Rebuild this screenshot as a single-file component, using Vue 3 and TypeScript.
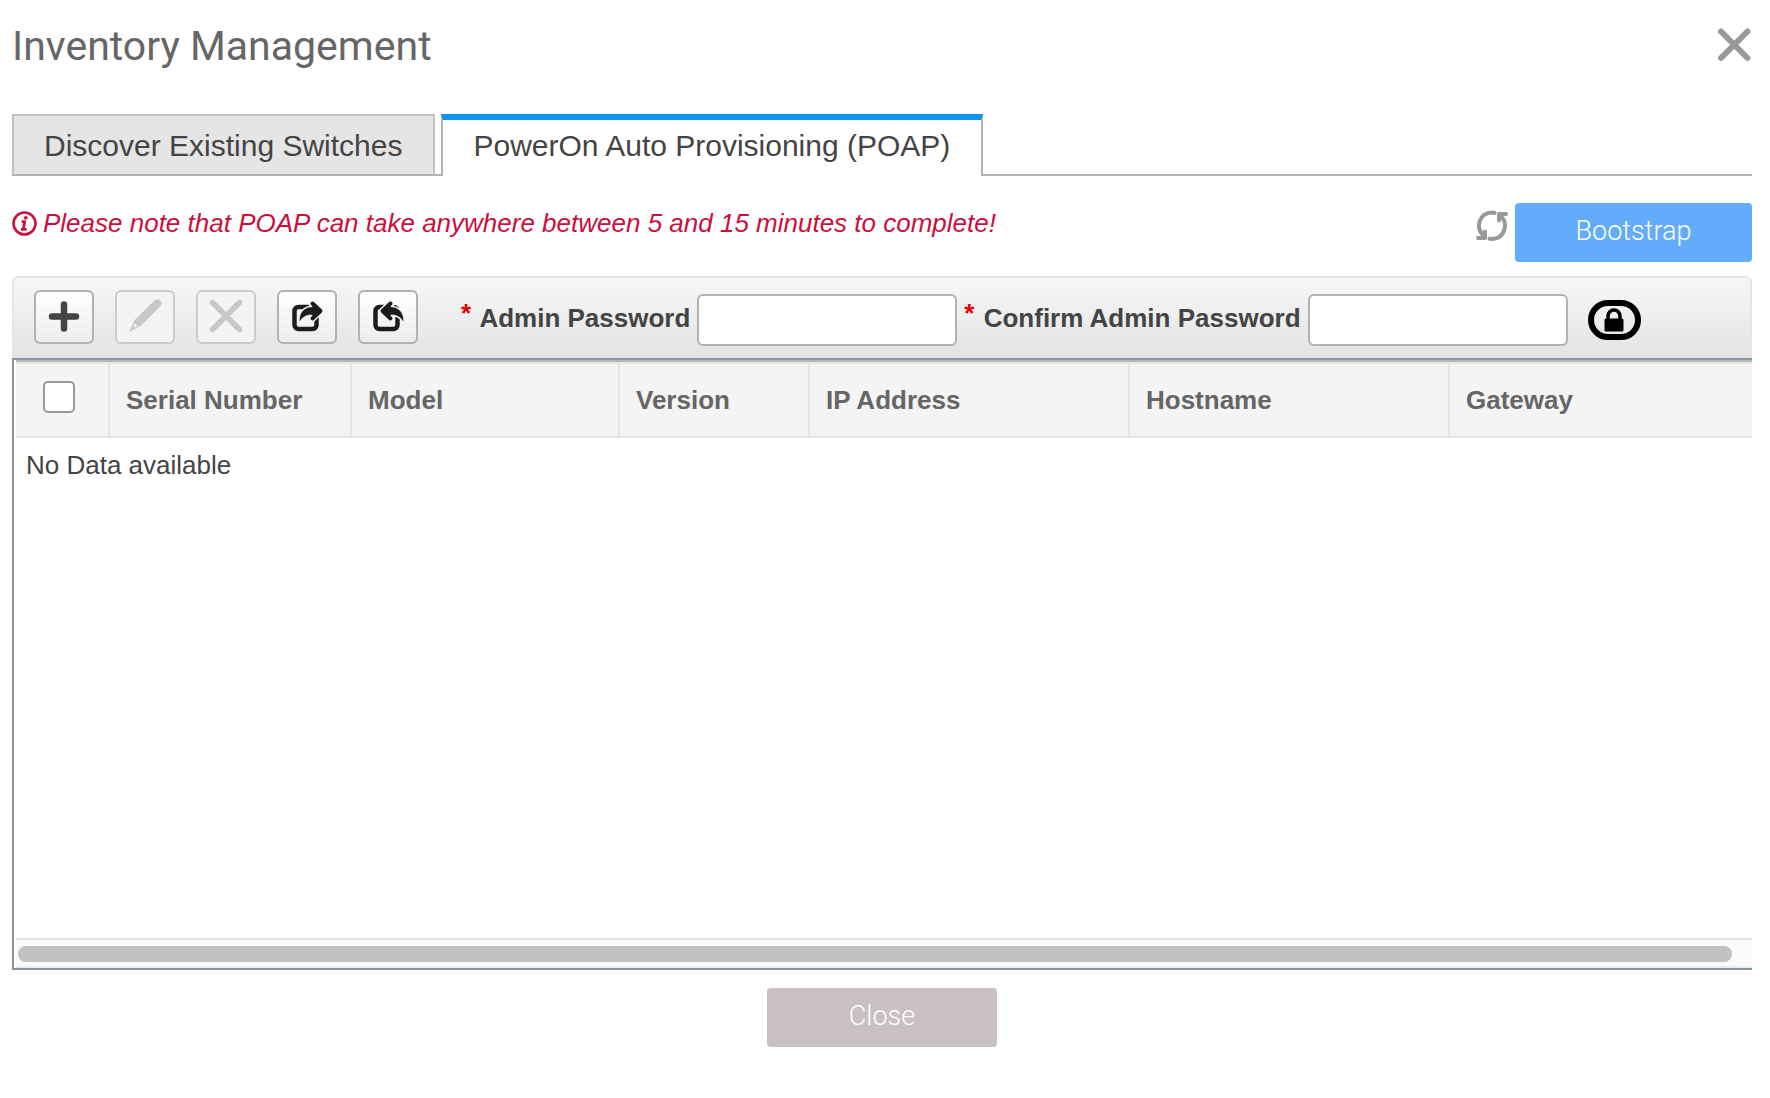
<script setup lang="ts">
import { ref } from 'vue'

interface Column {
  label: string
  width: number | null
}

const tabs: string[] = ['Discover Existing Switches', 'PowerOn Auto Provisioning (POAP)']
const activeTab = ref(1)

const columns: Column[] = [
  { label: 'Serial Number', width: 242 },
  { label: 'Model', width: 268 },
  { label: 'Version', width: 190 },
  { label: 'IP Address', width: 320 },
  { label: 'Hostname', width: 320 },
  { label: 'Gateway', width: null },
]

const password = ref('')
const confirmation = ref('')
const allSelected = ref(false)
</script>

<template>
  <main class="dialog">
    <header class="heading">
      <h1>Inventory Management</h1>
      <button class="plain" type="button" aria-label="Close dialog">
        <svg width="34" height="34" viewBox="0 0 34 34">
          <path d="M3 3.500 29.500 30M29.500 3.500 3 30" fill="none" stroke="#999" stroke-width="6" stroke-linecap="round" />
        </svg>
      </button>
    </header>

    <nav class="tabs" role="tablist">
      <button
        v-for="(tab, i) in tabs"
        :key="tab"
        type="button"
        role="tab"
        class="tab"
        :class="{ active: i === activeTab }"
        :aria-selected="i === activeTab"
        @click="activeTab = i"
      >{{ tab }}</button>
    </nav>

    <section class="notice-row">
      <p class="notice">
        <svg width="25" height="25" viewBox="0 0 25 25">
          <circle cx="12.5" cy="12.5" r="11" fill="none" stroke="#cc1340" stroke-width="2.6" />
          <circle cx="13.8" cy="6.8" r="1.9" fill="#cc1340" />
          <path d="M9.600 10.600h3.200l-1.400 7.400M9 18.300h5.600" fill="none" stroke="#cc1340" stroke-width="2.800" stroke-linejoin="round" />
        </svg>
        <span>Please note that POAP can take anywhere between 5 and 15 minutes to complete!</span>
      </p>
      <div class="actions">
        <button class="plain refresh" type="button" aria-label="Refresh">
          <svg width="32" height="32" viewBox="0 0 32 32" fill="none" stroke="#999" stroke-width="4" stroke-linecap="round" stroke-linejoin="round">
            <path d="M7 25C0 18 2 3 16.500 2.500L18.500 3" />
            <path d="M25 6.500C32 13 29.500 28 16.500 29L13.500 28.700" />
            <path d="M30 4H23V10.500M2 28H9V21.500" />
          </svg>
        </button>
        <button class="btn bootstrap" type="button">Bootstrap</button>
      </div>
    </section>

    <section class="toolbar">
      <div class="tools">
        <button class="tool" type="button" aria-label="Add">
          <svg width="40" height="40" viewBox="0 0 40 40">
            <path d="M20 7.500V31.500M8 19.500H32" fill="none" stroke="#444" stroke-width="6.500" stroke-linecap="round" />
          </svg>
        </button>
        <button class="tool" type="button" aria-label="Edit" disabled>
          <svg width="40" height="40" viewBox="0 0 40 40">
            <path d="M29.500 3.500Q32.500 1 35.500 3.500Q38 6.500 35 9.500L16 28.800L4 35L9.300 23.500Z" fill="#c8c8c8" />
            <path d="M9.800 26.500l3 2.800-2.600 1.200-1.500-1.400Z" fill="#f4f4f4" />
          </svg>
        </button>
        <button class="tool" type="button" aria-label="Delete" disabled>
          <svg width="40" height="40" viewBox="0 0 40 40">
            <path d="M6.500 5.500 33.500 32.500M33.500 5.500 6.500 32.500" fill="none" stroke="#c8c8c8" stroke-width="5.500" stroke-linecap="round" />
          </svg>
        </button>
        <button class="tool" type="button" aria-label="Export">
          <svg width="40" height="40" viewBox="0 0 40 40" fill="none" stroke-linecap="round" stroke-linejoin="round">
            <rect x="7.500" y="10" width="22" height="22" rx="4" stroke="#1b1c1d" stroke-width="4.500" />
            <path d="M12.500 24.500C12.500 14.500 18 10 26 10V18C20 17 16 19.500 12.500 24.500Z" fill="#f4f4f4" stroke="#f4f4f4" stroke-width="3" />
            <path d="M25.500 6.500 33.500 14 25.500 21.500Z" fill="#f4f4f4" stroke="#f4f4f4" stroke-width="7" />
            <path d="M12.500 24.500C12.500 14.500 18 10 26 10V18C20 17 16 19.500 12.500 24.500Z" fill="#1b1c1d" />
            <path d="M25.500 6.500 33.500 14 25.500 21.500" fill="#1b1c1d" stroke="#1b1c1d" stroke-width="4" />
          </svg>
        </button>
        <button class="tool" type="button" aria-label="Import">
          <svg width="40" height="40" viewBox="0 0 40 40" fill="none" stroke-linecap="round" stroke-linejoin="round">
            <rect x="7.500" y="10" width="22" height="22" rx="4" stroke="#1b1c1d" stroke-width="4.500" />
            <path d="M35.500 24.500C35.500 14.500 30 10 22 10V18C28 17 32 19.500 35.500 24.500Z" fill="#f4f4f4" stroke="#f4f4f4" stroke-width="3" />
            <path d="M22.500 6.500 14.500 14 22.500 21.500Z" fill="#f4f4f4" stroke="#f4f4f4" stroke-width="7" />
            <path d="M35.500 24.500C35.500 14.500 30 10 22 10V18C28 17 32 19.500 35.500 24.500Z" fill="#1b1c1d" />
            <path d="M22.500 6.500 14.500 14 22.500 21.500" fill="#1b1c1d" stroke="#1b1c1d" stroke-width="4" />
          </svg>
        </button>
      </div>
      <form class="fields" @submit.prevent>
        <label for="admin-password"><span class="star">*</span> Admin Password</label>
        <input id="admin-password" v-model="password" type="password" autocomplete="off" />
        <label for="confirm-password"><span class="star">*</span> Confirm Admin Password</label>
        <input id="confirm-password" v-model="confirmation" type="password" autocomplete="off" />
        <button class="lock" type="button" aria-label="Lock credentials">
          <svg width="20" height="24" viewBox="0 0 20 24">
            <path d="M4 12V8A6 6 0 0 1 16 8V12" fill="none" stroke="#000" stroke-width="3.500" />
            <rect x="0.500" y="10.500" width="19" height="13" rx="1.500" fill="#000" />
          </svg>
        </button>
      </form>
    </section>

    <section class="grid">
      <table>
        <colgroup>
          <col class="select-col" />
          <col v-for="c in columns" :key="c.label" :style="c.width ? { width: c.width + 'px' } : undefined" />
        </colgroup>
        <thead>
          <tr>
            <th class="select-cell">
              <input v-model="allSelected" type="checkbox" aria-label="Select all" />
            </th>
            <th v-for="c in columns" :key="c.label" scope="col">{{ c.label }}</th>
          </tr>
        </thead>
        <tbody>
          <tr>
            <td :colspan="columns.length + 1">No Data available</td>
          </tr>
        </tbody>
      </table>
      <div class="scroll-track"><div class="scroll-thumb"></div></div>
    </section>

    <footer>
      <button class="btn close" type="button">Close</button>
    </footer>
  </main>
</template>

<style>
body {
  margin: 0;
  background: #fff;
}
</style>

<style scoped>
.dialog {
  box-sizing: border-box;
  display: flex;
  flex-direction: column;
  min-height: 100vh;
  padding: 20px 18px 51px 12px;
  font-family: 'Liberation Sans', Arial, sans-serif;
  font-size: 26px;
  line-height: 30px;
  color: #444;
}

button,
input {
  box-sizing: border-box;
  margin: 0;
  font: inherit;
}

svg {
  display: block;
}

.plain {
  padding: 0;
  border: 0;
  background: none;
}

.heading {
  display: flex;
  justify-content: space-between;
  align-items: center;
  height: 50px;
  margin-bottom: 44px;
}

h1 {
  margin: 0;
  padding-top: 2px;
  font-family: Roboto, 'Liberation Sans', sans-serif;
  font-size: 41px;
  line-height: 50px;
  font-weight: 400;
  color: #666;
}

.tabs {
  display: flex;
  gap: 6px;
  height: 60px;
  border-bottom: 2px solid #b2b2b2;
}

.tab {
  height: 62px;
  padding: 2px 31px 0 30px;
  border: 2px solid #c0c0c0;
  border-bottom-color: #b2b2b2;
  background: #e5e5e5;
  color: #444;
  font-size: 30px;
  white-space: nowrap;
}

.tab.active {
  padding-top: 0;
  padding-bottom: 4px;
  border-color: #b2b2b2;
  border-top: 6px solid #0d94f0;
  border-bottom: 0;
  background: #fff;
}

.notice-row {
  display: flex;
  justify-content: space-between;
  align-items: flex-start;
  padding: 27px 0 14px;
}

.notice {
  display: flex;
  align-items: center;
  gap: 6px;
  height: 40px;
  margin: 0;
  color: #cc0f3c;
  font-style: italic;
}

.actions {
  display: flex;
  gap: 7px;
}

.refresh {
  align-self: flex-start;
  padding-top: 7px;
}

.btn {
  height: 59px;
  padding: 0 0 4px;
  border: 0;
  border-radius: 4px;
  color: #fff;
  font-family: Roboto, 'Liberation Sans', sans-serif;
  font-size: 27px;
  font-weight: 300;
}

.bootstrap {
  width: 237px;
  background: #63acfb;
}

.toolbar {
  display: flex;
  align-items: flex-start;
  gap: 43px;
  padding: 12px 20px;
  border: 2px solid #e5e5e5;
  border-bottom: 0;
  border-radius: 6px 6px 0 0;
  background: linear-gradient(#f7f7f7, #e3e3e3);
}

.tools {
  display: flex;
  gap: 21px;
}

.tool {
  display: flex;
  align-items: center;
  justify-content: center;
  width: 60px;
  height: 54px;
  padding: 0;
  border: 2px solid #b2b2b2;
  border-radius: 6px;
  background: linear-gradient(#fff, #ececec);
}

.tool:disabled {
  border-color: #ccc;
  background: #f4f4f4;
}

.fields {
  display: flex;
  align-items: center;
  gap: 7px;
  padding-top: 4px;
}

.fields label {
  padding-bottom: 8px;
  font-weight: 700;
  white-space: nowrap;
}

.star {
  margin-right: 2px;
  color: #e60000;
  vertical-align: 5px;
  line-height: 1;
}

.fields input {
  width: 260px;
  height: 52px;
  padding: 0 10px;
  border: 2px solid #b2b2b2;
  border-radius: 6px;
  background: #fff;
}

.lock {
  display: flex;
  align-items: center;
  justify-content: center;
  width: 53px;
  height: 40px;
  margin-left: 13px;
  padding: 0;
  border: 6px solid #000;
  border-radius: 20px;
  background: transparent;
}

.grid {
  display: flex;
  flex: 1;
  flex-direction: column;
  justify-content: space-between;
  padding-left: 2px;
  border: 2px solid #85959d;
  border-right: 0;
  overflow: hidden;
}

table {
  width: 100%;
  table-layout: fixed;
  border-collapse: separate;
  border-spacing: 0;
  border-top: 2px solid #b4b8ba;
}

.select-col {
  width: 94px;
}

th {
  box-sizing: border-box;
  height: 76px;
  padding: 0 16px;
  border: 2px solid #e5e5e5;
  border-left: 0;
  background: #f4f4f4;
  color: #666;
  text-align: left;
}

th:last-child {
  border-right: 0;
}

.select-cell {
  padding: 0 0 6px 27px;
}

.select-cell input {
  display: block;
  appearance: none;
  width: 32px;
  height: 32px;
  border: 2px solid #999;
  border-radius: 5px;
  background: #fff;
}

td {
  padding: 12px 10px;
}

.scroll-track {
  padding: 6px 20px 4px 2px;
  border-top: 2px solid #e5e5e5;
  border-bottom: 2px solid #e8eef1;
  background: #fafafa;
}

.scroll-thumb {
  height: 16px;
  border-radius: 8px;
  background: #c1c1c1;
}

footer {
  display: flex;
  justify-content: center;
  padding-top: 18px;
}

.close {
  width: 230px;
  background: #c9c0c1;
}
</style>
